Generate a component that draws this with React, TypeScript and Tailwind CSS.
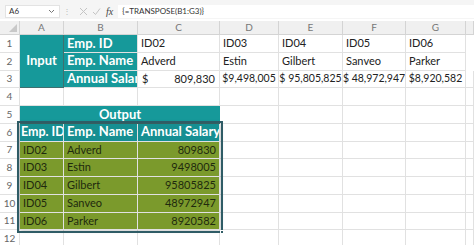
import { ReactNode } from "react";

const font = { fontFamily: 'Lato, "Open Sans", sans-serif' };

const cols = ["A", "B", "C", "D", "E", "F", "G", ""];
const ids = ["ID02", "ID03", "ID04", "ID05", "ID06"];
const names = ["Adverd", "Estin", "Gilbert", "Sanveo", "Parker"];
const salaries = ["$|809,830", "$9,498,005", "$ 95,805,825", "$ 48,972,947", "$8,920,582"];
const output = [
    ["ID02", "Adverd", "809830"],
    ["ID03", "Estin", "9498005"],
    ["ID04", "Gilbert", "95805825"],
    ["ID05", "Sanveo", "48972947"],
    ["ID06", "Parker", "8920582"],
];

const Cell = ({ className = "", children }: { className?: string; children?: ReactNode }) => (
    <div className={`flex items-center overflow-hidden whitespace-nowrap border-r border-b border-[#e1e1e1] ${className}`}>
        {children}
    </div>
);

const FormulaBar = () => (
    <div className="flex h-[19px] items-center bg-[#f5f5f5] pt-[3px]">
        <div className="ml-[5px] flex h-[13px] w-[55px] items-center justify-between border border-[#e3e3e3] bg-white pl-[3px] pr-[4px] text-[8px] text-[#333]">
            <span>A6</span>
            <svg width="7" height="5" viewBox="0 0 7 5"><path d="M1 1l2.5 2.5L6 1" fill="none" stroke="#777" strokeWidth="1" /></svg>
        </div>
        <span className="ml-[3px] text-[8px] text-[#bbb]">⋮</span>
        <svg className="ml-[8px]" width="9" height="9" viewBox="0 0 9 9"><path d="M1 1l7 7M8 1l-7 7" stroke="#c4c4c4" strokeWidth="1" /></svg>
        <svg className="ml-[4px]" width="9" height="9" viewBox="0 0 9 9"><path d="M1 5l2.5 2.5L8 1.5" fill="none" stroke="#c4c4c4" strokeWidth="1" /></svg>
        <span className="ml-[5px] text-[10px] italic text-[#444]" style={{ fontFamily: '"Liberation Serif", serif' }}>fx</span>
        <div className="ml-[5px] flex h-[13px] flex-1 items-center bg-white pl-[4px] text-[8px] text-[#333]">
            {"{=TRANSPOSE(B1:G3)}"}
        </div>
    </div>
);

export default function App() {
    return (
        <div className="h-[245px] w-[474px] overflow-hidden bg-white" style={font}>
            <FormulaBar />
            <div className="mt-[2px] grid grid-cols-[20px_44px_74px_82px_59px_64px_63px_60px_1fr] grid-rows-[14px_repeat(12,17.75px)] text-[11px] text-[#222]">
                {/* corner + column letters */}
                <div className="flex items-end justify-end border-r border-b border-[#d4d4d4] bg-[#f0f0f0] p-[2px]">
                    <svg width="8" height="8" viewBox="0 0 8 8"><path d="M8 0v8H0z" fill="#c8c8c8" /></svg>
                </div>
                {cols.map((c, i) => (
                    <div key={i} className="flex items-center justify-center border-r border-b border-[#d4d4d4] bg-[#f0f0f0] text-[10px] text-[#777]">
                        {c}
                    </div>
                ))}

                {/* row numbers */}
                {Array.from({ length: 12 }, (_, i) => (
                    <div key={i} className="flex items-center justify-center border-r border-b border-[#e1e1e1] text-[10px] text-[#666]" style={{ gridColumn: 1, gridRow: i + 2 }}>
                        {i + 1}
                    </div>
                ))}

                {/* input block */}
                <div className="col-start-2 row-start-2 row-span-3 flex items-center justify-center border-r border-b border-[#3f6f6f] bg-[#16999a] text-[13px] font-bold text-white">
                    Input
                </div>
                {["Emp. ID", "Emp. Name", "Annual Salary"].map((t, r) => (
                    <Cell key={t} className={`col-start-3 border-[#3f6f6f] bg-[#16999a] pl-[3px] text-[13px] font-bold text-white ${["row-start-2", "row-start-3", "row-start-4"][r]}`}>
                        {t}
                    </Cell>
                ))}
                {ids.map((id) => (
                    <Cell key={id} className="row-start-2 border-[#555] pl-[3px]">{id}</Cell>
                ))}
                {names.map((n) => (
                    <Cell key={n} className="row-start-3 border-[#555] pl-[3px]">{n}</Cell>
                ))}
                {salaries.map((s, i) =>
                    i === 0 ? (
                        <Cell key={s} className="row-start-4 justify-between border-[#555] px-[4px]">
                            <span>$</span>
                            <span>809,830</span>
                        </Cell>
                    ) : (
                        <Cell key={s} className="row-start-4 justify-center whitespace-pre border-[#555] text-[10.5px]">
                            {s}
                        </Cell>
                    )
                )}
                <Cell className="row-start-4" />

                {/* empty row 4 */}
                {Array.from({ length: 8 }, (_, i) => (
                    <Cell key={i} className="row-start-5" />
                ))}

                {/* output title */}
                <div className="col-start-2 col-span-3 row-start-6 flex items-center justify-center border-b border-[#3f6f6f] bg-[#16999a] text-[13px] font-bold text-white">
                    Output
                </div>
                {Array.from({ length: 5 }, (_, i) => (
                    <Cell key={i} className="row-start-6" />
                ))}

                {/* output table */}
                <div className="relative col-start-2 col-span-3 row-start-7 row-span-6 grid grid-cols-[44px_74px_82px] grid-rows-[repeat(6,1fr)] outline-2 outline-offset-[1px] outline-[#2f5c66] shadow-[0_0_4px_rgba(0,0,0,0.35)]">
                    {["Emp. ID", "Emp. Name", "Annual Salary"].map((t, i) => (
                        <Cell key={t} className={`border-[#2e5e5e] bg-[#168f92] font-bold text-white ${i === 0 ? "pl-[1px] text-[12.5px]" : "pl-[3px] text-[13px]"}`}>
                            {t}
                        </Cell>
                    ))}
                    {output.map((row) =>
                        row.map((v, j) => (
                            <Cell key={row[0] + j} className={`border-[#3d4f1c] bg-[#7b9a2c] text-[#1f2a0e] ${j === 2 ? "justify-end pr-[3px]" : "pl-[3px]"}`}>
                                {v}
                            </Cell>
                        ))
                    )}
                    <div className="absolute -right-[4px] -bottom-[4px] h-[4px] w-[4px] border border-white bg-[#2f5c66]" />
                </div>

                {/* remaining grid */}
                {Array.from({ length: 6 }, (_, r) =>
                    Array.from({ length: 5 }, (_, c) => (
                        <Cell key={`${r}-${c}`} className={["row-start-7", "row-start-8", "row-start-9", "row-start-10", "row-start-11", "row-start-12"][r]} />
                    ))
                )}
                {Array.from({ length: 8 }, (_, i) => (
                    <Cell key={`l${i}`} className="row-start-13" />
                ))}
            </div>
        </div>
    );
}
